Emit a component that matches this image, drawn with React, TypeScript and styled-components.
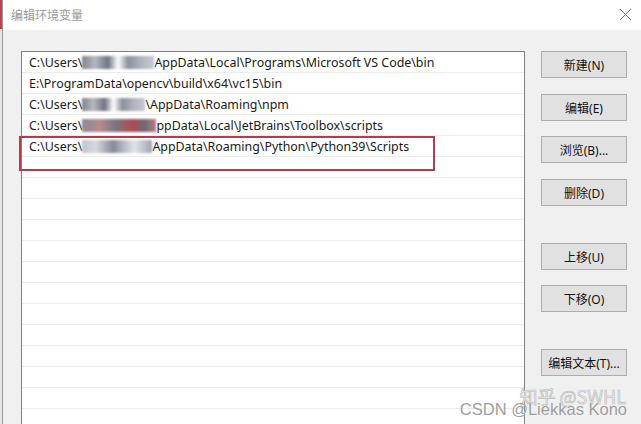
import React from "react";
import styled, { createGlobalStyle } from "styled-components";

const Global = createGlobalStyle`
  html, body { margin: 0; padding: 0; background: #f0f0f0; }
  body { width: 641px; height: 424px; overflow: hidden; }
  #root { width: 641px; height: 424px; }
`;

const Screen = styled.div`
  display: flex;
  width: 641px;
  height: 424px;
  overflow: hidden;
  font-family: "Noto Sans", "Noto Sans CJK SC", sans-serif;
  position: relative;
`;

const LeftEdge = styled.div`
  width: 3px;
  flex: none;
  display: flex;
  flex-direction: column;
  background: #e6e6e6;
  border-right: 1px solid #9a9a9a;
  box-sizing: border-box;
`;

const EdgeRed = styled.div`
  height: 29px;
  background: #c2404e;
`;

const Window = styled.div`
  flex: 1;
  display: flex;
  flex-direction: column;
  min-width: 0;
`;

const TitleBar = styled.div`
  height: 30px;
  flex: none;
  background: #ffffff;
  display: flex;
  align-items: center;
  justify-content: space-between;
  padding: 0 9px 2px 8px;
  box-sizing: border-box;
`;

const Title = styled.span`
  font-family: "Noto Sans CJK SC", sans-serif;
  font-size: 12px;
  color: #9a9a9a;
`;

const Body = styled.div`
  flex: 1;
  display: flex;
  background: #f0f0f0;
  padding: 21px 0 0 18px;
  min-height: 0;
`;

const ListWrap = styled.div`
  position: relative;
  width: 504px;
  flex: none;
  margin-bottom: -4px;
`;

const List = styled.div`
  height: 100%;
  background: #ffffff;
  border: 1px solid #828282;
  border-bottom: none;
  box-sizing: border-box;
  overflow: hidden;
`;

const Row = styled.div`
  height: 21px;
  box-sizing: border-box;
  border-bottom: 1px solid #ececec;
  display: flex;
  align-items: center;
  padding-left: 7px;
  font-size: 12.4px;
  color: #1a1a1a;
  white-space: nowrap;
`;

const Blur = styled.span<{ $w: number; $bg: string }>`
  display: inline-block;
  width: ${(p) => p.$w}px;
  height: 13px;
  background: ${(p) => p.$bg};
  filter: blur(1.3px);
`;

const Highlight = styled.div`
  position: absolute;
  left: -2px;
  top: 85px;
  width: 416px;
  height: 35px;
  border: 2px solid #b43c4a;
  box-sizing: border-box;
  pointer-events: none;
`;

const Buttons = styled.div`
  margin-left: 16px;
  width: 86px;
  display: flex;
  flex-direction: column;
`;

const Btn = styled.div<{ $gap: number }>`
  margin-top: ${(p) => p.$gap}px;
  height: 27px;
  box-sizing: border-box;
  background: #e1e1e1;
  border: 1px solid #adadad;
  display: flex;
  align-items: center;
  justify-content: center;
  font-family: "Noto Sans", "Noto Sans CJK SC", sans-serif;
  font-size: 12px;
  color: #111;
`;

const Watermark = styled.div`
  position: absolute;
  right: 14px;
  bottom: 7px;
  display: flex;
  flex-direction: column;
  align-items: flex-end;
  pointer-events: none;
`;

const Zhihu = styled.span`
  font-family: "Noto Sans CJK SC", sans-serif;
  font-size: 18px;
  line-height: 18px;
  color: #ececec;
  -webkit-text-stroke: 0.6px #b9b9b9;
  margin-right: 1px;
`;

const Csdn = styled.span`
  font-family: "Liberation Sans", Arial, sans-serif;
  font-size: 16.5px;
  line-height: 16px;
  color: #9d9d9d;
  text-shadow: 0 0 1px #fff;
  margin-top: -4px;
`;

const grayBlur =
  "linear-gradient(90deg, #7e848e 0%, #b8b8be 18%, #6e7480 36%, #ffffff 50%, #8c909a 64%, #b0b4bc 82%, #c8cad2 100%)";
const pinkBlur =
  "linear-gradient(90deg, #8e8a92 0%, #b48a90 25%, #7a7680 45%, #b04a56 68%, #6e6a74 85%, #c07a82 100%)";
const lightBlur =
  "linear-gradient(90deg, #c0c4cc 0%, #d8d8dc 20%, #868a96 45%, #b8bcc6 60%, #e4e4e8 75%, #a0a4b2 100%)";

const rows: Array<{ pre: string; blur?: { w: number; bg: string }; post: string }> = [
  { pre: "C:\\Users\\", blur: { w: 72, bg: grayBlur }, post: "AppData\\Local\\Programs\\Microsoft VS Code\\bin" },
  { pre: "E:\\ProgramData\\opencv\\build\\x64\\vc15\\bin", post: "" },
  { pre: "C:\\Users\\", blur: { w: 63, bg: grayBlur }, post: "\\AppData\\Roaming\\npm" },
  { pre: "C:\\Users\\", blur: { w: 74, bg: pinkBlur }, post: "ppData\\Local\\JetBrains\\Toolbox\\scripts" },
  { pre: "C:\\Users\\", blur: { w: 70, bg: lightBlur }, post: "AppData\\Roaming\\Python\\Python39\\Scripts" },
];

const buttons = [
  { label: "新建(N)", gap: 0 },
  { label: "编辑(E)", gap: 16 },
  { label: "浏览(B)...", gap: 15 },
  { label: "删除(D)", gap: 16 },
  { label: "上移(U)", gap: 37 },
  { label: "下移(O)", gap: 15 },
  { label: "编辑文本(T)...", gap: 37 },
];

export default function App() {
  const empty = Array.from({ length: 14 });
  return (
    <>
      <Global />
      <Screen>
        <LeftEdge>
          <EdgeRed />
        </LeftEdge>
        <Window>
          <TitleBar>
            <Title>编辑环境变量</Title>
            <svg width="13" height="13" viewBox="0 0 13 13">
              <path d="M1 1 L12 12 M12 1 L1 12" stroke="#6d6d6d" strokeWidth="1" fill="none" />
            </svg>
          </TitleBar>
          <Body>
            <ListWrap>
              <List>
                {rows.map((r, i) => (
                  <Row key={i}>
                    {r.pre}
                    {r.blur && <Blur $w={r.blur.w} $bg={r.blur.bg} />}
                    {r.post}
                  </Row>
                ))}
                {empty.map((_, i) => (
                  <Row key={"e" + i} />
                ))}
              </List>
              <Highlight />
            </ListWrap>
            <Buttons>
              {buttons.map((b) => (
                <Btn key={b.label} $gap={b.gap}>
                  {b.label}
                </Btn>
              ))}
            </Buttons>
          </Body>
        </Window>
        <Watermark>
          <Zhihu>知乎 @SWHL</Zhihu>
          <Csdn>CSDN @Liekkas Kono</Csdn>
        </Watermark>
      </Screen>
    </>
  );
}
